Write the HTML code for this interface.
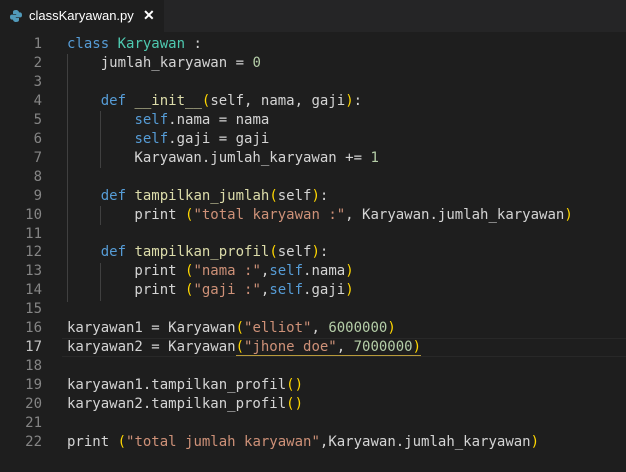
<!DOCTYPE html><html><head><style>
body{margin:0;width:626px;height:472px;background:#1e1e1e;overflow:hidden;font-family:"DejaVu Sans Mono",monospace;}
.tabs{height:32px;background:#252526;position:relative}
.tab{position:absolute;left:0;top:0;width:164px;height:32px;background:#1e1e1e;font-family:"Liberation Sans",sans-serif;font-size:13px;color:#fff;}
.tab .t{position:absolute;left:29px;top:8px}
.tab .x{position:absolute;left:143px;top:7px;font-size:14px;font-weight:bold}
.ed{position:absolute;top:35px;left:0;right:0;font-size:14px;line-height:18.95px;white-space:pre;color:#d4d4d4}
.ln{position:absolute;left:0;width:42px;text-align:right;color:#858585}
.cd{position:absolute;left:67px}
.k{color:#569cd6}.c{color:#4ec9b0}.s{color:#ce9178}.n{color:#b5cea8}.p{color:#ffd700}.f{color:#dcdcaa}
.g{position:absolute;width:1px;background:#404040}
.cur{position:absolute;left:62px;right:0;top:338px;height:17px;border-top:1px solid #282828;border-bottom:1px solid #282828}
.u{border-bottom:1px solid #b89a3a}
</style></head><body>
<div class="tabs"><div class="tab"><svg style="position:absolute;left:10px;top:10px" width="12" height="12" viewBox="0 0 12 12"><path d="M6 0C3 0 3 1.5 3 2.5V4h3.2v.6H1.8C.5 4.6 0 5.6 0 7s.6 2.6 1.8 2.6H3V8c0-1 .8-1.8 1.8-1.8h3C8.6 6.2 9 5.5 9 4.8V2.5C9 1 7.5 0 6 0z" fill="#519aba"/><path d="M6 12c3 0 3-1.5 3-2.5V8H5.8v-.6h4.4C11.5 7.4 12 6.4 12 5s-.6-2.6-1.8-2.6H9V4c0 1-.8 1.8-1.8 1.8h-3C3.4 5.8 3 6.5 3 7.2v2.3C3 11 4.5 12 6 12z" fill="#519aba"/></svg><span class="t">classKaryawan.py</span><span class="x">✕</span></div></div>
<div class="cur"></div>
<div class="g" style="left:67px;top:54px;height:248px"></div>
<div class="g" style="left:100px;top:111px;height:57px"></div>
<div class="g" style="left:100px;top:206px;height:19px"></div>
<div class="g" style="left:100px;top:263px;height:38px"></div>
<div class="ed"><div class="ln">1
2
3
4
5
6
7
8
9
10
11
12
13
14
15
16
<span style="color:#c6c6c6">17</span>
18
19
20
21
22</div><div class="cd"><span class="k">class</span> <span class="c">Karyawan</span> :
    jumlah_karyawan = <span class="n">0</span>

    <span class="k">def</span> <span class="f">__init__</span><span class="p">(</span>self, nama, gaji<span class="p">)</span>:
        <span class="k">self</span>.nama = nama
        <span class="k">self</span>.gaji = gaji
        Karyawan.jumlah_karyawan += <span class="n">1</span>

    <span class="k">def</span> <span class="f">tampilkan_jumlah</span><span class="p">(</span>self<span class="p">)</span>:
        print <span class="p">(</span><span class="s">"total karyawan :"</span>, Karyawan.jumlah_karyawan<span class="p">)</span>

    <span class="k">def</span> <span class="f">tampilkan_profil</span><span class="p">(</span>self<span class="p">)</span>:
        print <span class="p">(</span><span class="s">"nama :"</span>,<span class="k">self</span>.nama<span class="p">)</span>
        print <span class="p">(</span><span class="s">"gaji :"</span>,<span class="k">self</span>.gaji<span class="p">)</span>

karyawan1 = Karyawan<span class="p">(</span><span class="s">"elliot"</span>, <span class="n">6000000</span><span class="p">)</span>
karyawan2 = Karyawan<span class="p u">(<span class="s">"jhone doe"</span><span style="color:#d4d4d4">, </span><span class="n">7000000</span>)</span>

karyawan1.tampilkan_profil<span class="p">()</span>
karyawan2.tampilkan_profil<span class="p">()</span>

print <span class="p">(</span><span class="s">"total jumlah karyawan"</span>,Karyawan.jumlah_karyawan<span class="p">)</span></div></div>
</body></html>
